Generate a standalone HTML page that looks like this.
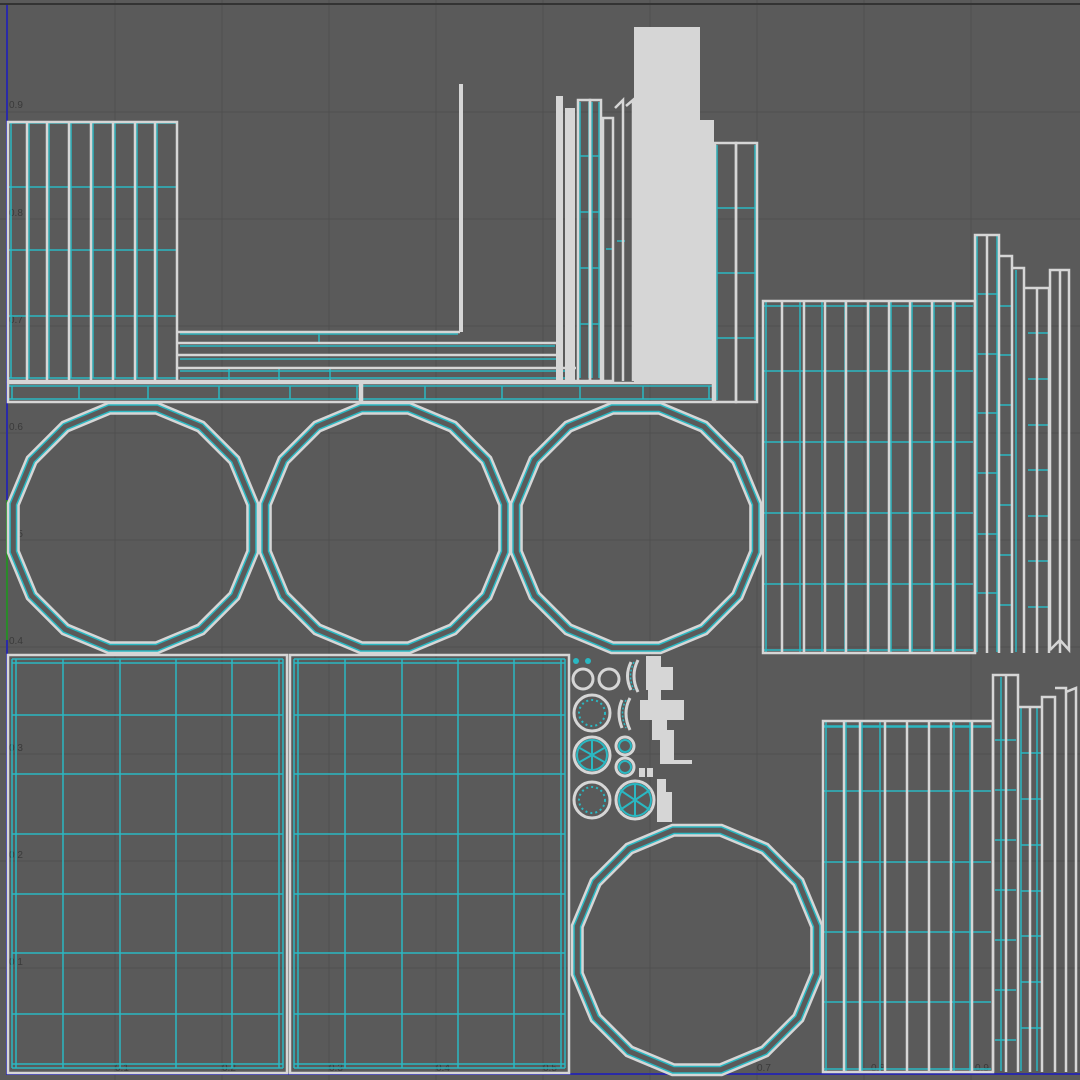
<!DOCTYPE html>
<html><head><meta charset="utf-8"><style>
html,body{margin:0;padding:0;background:#5a5a5a;}
svg{display:block;}
text{font-family:"Liberation Sans",sans-serif;font-size:10px;fill:#3a3a3a;}
</style></head><body>
<svg width="1080" height="1080" viewBox="0 0 1080 1080" xmlns="http://www.w3.org/2000/svg">
<defs>
<polygon id="p16" points="119.7,23.8 101.4,67.8 67.8,101.4 23.8,119.7 -23.8,119.7 -67.8,101.4 -101.4,67.8 -119.7,23.8 -119.7,-23.8 -101.4,-67.8 -67.8,-101.4 -23.8,-119.7 23.8,-119.7 67.8,-101.4 101.4,-67.8 119.7,-23.8" fill="none"/>
</defs>
<rect width="1080" height="1080" fill="#5a5a5a"/>
<!-- grid -->
<g stroke="#505050" stroke-width="1">
<path d="M115 0V1080M222 0V1080M329 0V1080M436 0V1080M543 0V1080M650 0V1080M757 0V1080M864 0V1080M971 0V1080"/>
<path d="M0 112H1080M0 219H1080M0 326H1080M0 433H1080M0 540H1080M0 647H1080M0 754H1080M0 861H1080M0 968H1080"/>
</g>
<rect x="0" y="3" width="1080" height="2" fill="#333"/>
<rect x="6" y="5" width="2" height="1070" fill="#2a2aa8"/>
<rect x="6" y="500" width="2" height="140" fill="#2a8a2a"/>
<rect x="6" y="1073" width="1074" height="2" fill="#2a2aa8"/>
<text x="9" y="108">0.9</text><text x="9" y="216">0.8</text><text x="9" y="323">0.7</text><text x="9" y="430">0.6</text><text x="9" y="537">0.5</text><text x="9" y="644">0.4</text><text x="9" y="751">0.3</text><text x="9" y="858">0.2</text><text x="9" y="965">0.1</text>
<text x="115" y="1071">0.1</text><text x="222" y="1071">0.2</text><text x="329" y="1071">0.3</text><text x="436" y="1071">0.4</text><text x="543" y="1071">0.5</text><text x="757" y="1071">0.7</text><text x="871" y="1071">0.8</text><text x="975" y="1071">0.9</text>

<!-- top-left strips -->
<g stroke="#2ab8c2" stroke-width="1.5">
<path d="M9 187H176M9 250H176M9 316H176M9 123H176M9 378H176"/>
<path d="M11 123V378M29 123V378M49 123V378M71 123V378M93 123V378M115 123V378M137 123V378M157 123V378"/>
<path d="M9 386H712M9 399H712M12 386V399M79 386V399M148 386V399M219 386V399M290 386V399M357 386V399M425 386V399M502 386V399M580 386V399M643 386V399M709 386V399"/>
<path d="M180 334H458M180 346H555M180 359H562M180 371H575M180 378H575M319 333V342M229 369V380M279 369V380M330 369V380"/>
</g>
<g fill="none" stroke="#d6d6d6" stroke-width="2.5">
<rect x="8" y="122" width="169" height="259"/>
<path d="M27 122V381M47 122V381M69 122V381M91 122V381M113 122V381M135 122V381M155 122V381"/>
<rect x="8" y="383" width="352" height="19"/>
<rect x="362" y="383" width="351" height="19"/>
<path d="M178 332H460M178 343H556M178 355H563M178 368H576M178 381H578"/>
</g>
<rect x="459" y="84" width="4" height="248" fill="#d6d6d6"/>
<!-- middle vertical strips -->
<rect x="556" y="96" width="7" height="284" fill="#d6d6d6"/>
<rect x="565" y="108" width="10" height="272" fill="#d6d6d6"/>
<g stroke="#2ab8c2" stroke-width="1.5"><path d="M580 102V378M589 102V378M592 102V378M599 102V378M580 156H600M580 212H600M580 268H600M580 324H600M606 249H613M617 241H625"/></g>
<g fill="none" stroke="#d6d6d6" stroke-width="2.5">
<rect x="578" y="100" width="12" height="281"/><rect x="590" y="100" width="11" height="281"/>
<rect x="603" y="118" width="10" height="263"/>
<path d="M615 108L623 100V381M626 106L633 100V381"/>
</g>
<path d="M634 27H700V120H714V383H634Z" fill="#d6d6d6"/>
<g stroke="#2ab8c2" stroke-width="1.5"><path d="M717 145V400M755 145V400M717 208H756M717 273H756M717 338H756"/></g>
<g fill="none" stroke="#d6d6d6" stroke-width="2.5"><rect x="715" y="143" width="21" height="259"/><rect x="736" y="143" width="21" height="259"/></g>

<!-- rings -->
<g transform="translate(133,528)"><use href="#p16" stroke="#d6d6d6" stroke-width="13"/><use href="#p16" stroke="#2ab8c2" stroke-width="8"/><use href="#p16" stroke="#5a5a5a" stroke-width="5"/></g>
<g transform="translate(385,528)"><use href="#p16" stroke="#d6d6d6" stroke-width="13"/><use href="#p16" stroke="#2ab8c2" stroke-width="8"/><use href="#p16" stroke="#5a5a5a" stroke-width="5"/></g>
<g transform="translate(636,528)"><use href="#p16" stroke="#d6d6d6" stroke-width="13"/><use href="#p16" stroke="#2ab8c2" stroke-width="8"/><use href="#p16" stroke="#5a5a5a" stroke-width="5"/></g>
<g transform="translate(697,950)"><use href="#p16" stroke="#d6d6d6" stroke-width="13"/><use href="#p16" stroke="#2ab8c2" stroke-width="8"/><use href="#p16" stroke="#5a5a5a" stroke-width="5"/></g>

<!-- right block -->
<g stroke="#2ab8c2" stroke-width="1.5">
<path d="M764 371H973M764 442H973M764 513H973M764 584H973M764 650H973M764 306H973"/>
<path d="M766 302V652M800 302V652M822 302V652M845 302V652M869 302V652M891 302V652M912 302V652M934 302V652M955 302V652"/>
<path d="M977 236V652M997 236V652M1016 270V652M977 294H998M977 354H998M977 413H998M977 473H998M977 534H998M977 593H998M1000 306H1013M1000 355H1013M1000 405H1013M1000 455H1013M1000 505H1013M1000 555H1013M1000 605H1013M1028 333H1048M1028 379H1048M1028 425H1048M1028 470H1048M1028 516H1048M1028 561H1048M1028 607H1048"/>
</g>
<g fill="none" stroke="#d6d6d6" stroke-width="2.5">
<rect x="763" y="301" width="212" height="352"/>
<path d="M782 301V653M804 301V653M825 301V653M846 301V653M868 301V653M889 301V653M910 301V653M932 301V653M953 301V653"/>
<path d="M975 653V235H987V653M987 235H999V653M999 653V256H1012V653M1012 268H1024V653M1024 288H1037V653M1037 288H1049V653M1050 650V270H1060V653M1060 270H1069V650L1060 640L1050 650"/>
</g>

<!-- bottom right block -->
<g stroke="#2ab8c2" stroke-width="1.5">
<path d="M824 727H991M824 791H991M824 862H991M824 932H991M824 1002H991M824 1069H991M824 726H991"/>
<path d="M826 722V1071M846 722V1071M862 722V1071M880 722V1071M954 722V1071M970 722V1071M1001 677V1071M1021 708V1071M1037 708V1071M995 740H1016M995 790H1016M995 840H1016M995 890H1016M995 940H1016M995 990H1016M995 1040H1016M1021 753H1041M1021 799H1041M1021 845H1041M1021 891H1041M1021 936H1041M1021 982H1041M1021 1028H1041"/>
</g>
<g fill="none" stroke="#d6d6d6" stroke-width="2.5">
<rect x="823" y="721" width="170" height="351"/>
<path d="M844 721V1072M860 721V1072M885 721V1072M907 721V1072M929 721V1072M951 721V1072M972 721V1072"/>
<path d="M993 1072V675H1006V1072M1006 675H1018V1072M1018 707H1030V1072M1030 707H1042V1072M1042 1072V697H1055V1072M1055 688H1066V1072M1066 1072V692L1076 688V1072"/>
</g>

<!-- bottom-left squares -->
<g stroke="#2ab8c2" stroke-width="1.5">
<path d="M12 659V1068M16 659V1068M63 659V1068M120 659V1068M176 659V1068M232 659V1068M279 659V1068M283 659V1068"/>
<path d="M12 659H283M12 663H283M12 715H283M12 774H283M12 834H283M12 894H283M12 953H283M12 1014H283M12 1064H283M12 1068H283"/>
<path d="M294 659V1068M298 659V1068M345 659V1068M402 659V1068M458 659V1068M514 659V1068M561 659V1068M565 659V1068"/>
<path d="M294 659H565M294 663H565M294 715H565M294 774H565M294 834H565M294 894H565M294 953H565M294 1014H565M294 1064H565M294 1068H565"/>
</g>
<g fill="none" stroke="#d6d6d6" stroke-width="2.5">
<rect x="8" y="655" width="279" height="418"/>
<rect x="290" y="655" width="279" height="418"/>
</g>

<!-- small parts -->
<g fill="none" stroke="#d6d6d6" stroke-width="3">
<circle cx="583" cy="679" r="10"/><circle cx="609" cy="679" r="10"/>
<circle cx="592" cy="713" r="18"/><circle cx="592" cy="755" r="18"/><circle cx="592" cy="800" r="18"/>
<circle cx="625" cy="746" r="9"/><circle cx="625" cy="767" r="9"/><circle cx="635" cy="800" r="19"/>
</g>
<g fill="none" stroke="#2ab8c2" stroke-width="2">
<circle cx="592" cy="713" r="13" stroke-dasharray="2 3"/><circle cx="592" cy="800" r="13" stroke-dasharray="2 3"/>
<circle cx="592" cy="755" r="15"/><circle cx="635" cy="800" r="16"/><circle cx="625" cy="746" r="6"/><circle cx="625" cy="767" r="6"/>
<path d="M578 747L606 763M578 763L606 747M592 740V770M620 790L650 810M620 810L650 790M635 784V816"/>
</g>
<circle cx="576" cy="661" r="3" fill="#2ab8c2"/><circle cx="588" cy="661" r="3" fill="#2ab8c2"/>
<g fill="none" stroke="#d6d6d6" stroke-width="3"><path d="M631 662Q624 676 631 690M638 660Q630 676 638 692M622 700Q616 713 622 728M630 698Q622 713 630 730"/></g>
<g fill="none" stroke="#2ab8c2" stroke-width="1.5" stroke-dasharray="2 2"><path d="M634 662Q627 676 634 690M626 700Q619 713 626 728"/></g>
<path d="M646 656H661V667H673V690H661V700H684V720H667V730H674V760H692V764H660V740H652V720H640V700H648V690H646Z" fill="#d6d6d6"/>
<rect x="639" y="768" width="6" height="9" fill="#d6d6d6"/><rect x="647" y="768" width="6" height="9" fill="#d6d6d6"/>
<path d="M657 779H666V792H672V822H657Z" fill="#d6d6d6"/>
</svg>
</body></html>
